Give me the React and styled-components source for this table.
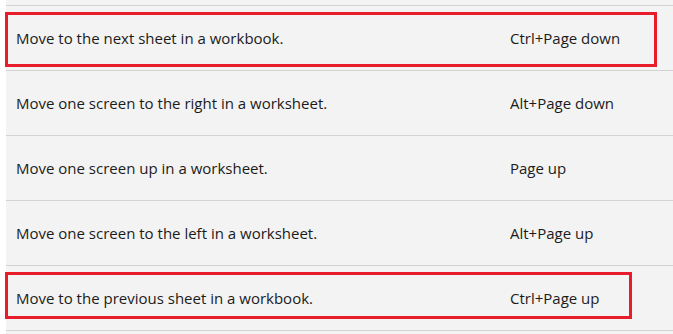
import styled, { createGlobalStyle } from 'styled-components';

const GlobalStyle = createGlobalStyle`
  html, body {
    margin: 0;
    padding: 0;
    background: #ffffff;
  }
`;

const rows = [
  { action: 'Move to the next sheet in a workbook.', keys: 'Ctrl+Page down', mark: 657 },
  { action: 'Move one screen to the right in a worksheet.', keys: 'Alt+Page down' },
  { action: 'Move one screen up in a worksheet.', keys: 'Page up' },
  { action: 'Move one screen to the left in a worksheet.', keys: 'Alt+Page up' },
  { action: 'Move to the previous sheet in a workbook.', keys: 'Ctrl+Page up', mark: 632 }
];

const St = {
  Table: styled.div`
    margin-left: 6px;
    background: #f3f3f3;
    font-family: 'Open Sans', 'Noto Sans', sans-serif;
    font-size: 15px;
    color: #1b1b1b;
  `,
  Edge: styled.div`
    height: ${(p) => p.$h}px;
    border-top: ${(p) => (p.$line ? '1px solid #d2d2d2' : 'none')};
  `,
  Row: styled.div`
    position: relative;
    display: flex;
    align-items: center;
    height: 64px;
    padding-left: 10px;
    border-top: 1px solid #d2d2d2;
  `,
  Action: styled.span`
    flex: 0 0 494px;
    white-space: nowrap;
  `,
  Keys: styled.span`
    white-space: nowrap;
  `,
  Highlight: styled.div`
    position: absolute;
    left: -1px;
    top: 6px;
    width: ${(p) => p.$right - 5}px;
    height: ${(p) => p.$h}px;
    box-sizing: border-box;
    border: 3px solid #e81c2a;
    pointer-events: none;
  `
};

const App = () => (
  <>
    <GlobalStyle />
    <St.Table>
      <St.Edge $h={5} />
      {rows.map((r, i) => (
        <St.Row key={r.keys}>
          <St.Action>{r.action}</St.Action>
          <St.Keys>{r.keys}</St.Keys>
          {r.mark && <St.Highlight $right={r.mark} $h={i === 0 ? 55 : 47} />}
        </St.Row>
      ))}
      <St.Edge $h={3} $line />
    </St.Table>
  </>
);

export default App;
